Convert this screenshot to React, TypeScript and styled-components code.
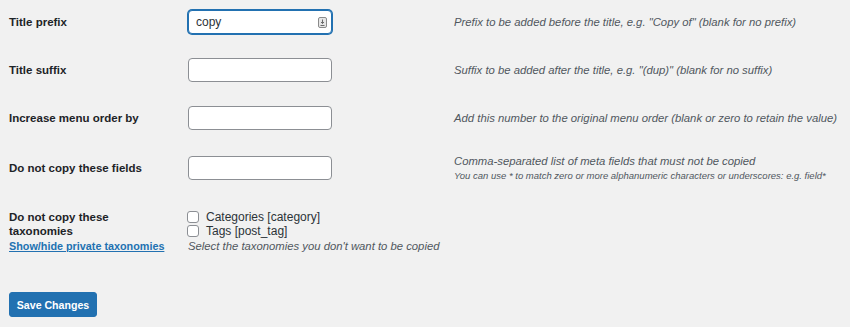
import React from 'react'
import styled, { createGlobalStyle } from 'styled-components'

const GlobalStyle = createGlobalStyle`
  html, body {
    margin: 0;
    padding: 0;
    background: #f1f1f1;
  }
  body {
    font-family: "Liberation Sans", Arial, sans-serif;
    font-size: 12px;
    color: #1d2327;
  }
`

const Page = styled('form')`
  padding: 0 9px;
  width: 850px;
  box-sizing: border-box;
`

const Row = styled('div')<{ top?: boolean }>`
  display: grid;
  grid-template-columns: 179px 266px 1fr;
  align-items: ${p => (p.top ? 'start' : 'center')};
  padding: ${p => (p.top ? '13px 0 0' : '10px 0 14px')};
`

const Label = styled('label')`
  font-weight: 700;
  font-size: 11.5px;
  line-height: 14.5px;
  width: 160px;
`

const Input = styled('input')<{ focused?: boolean }>`
  box-sizing: border-box;
  width: 144px;
  height: 24px;
  margin: 0;
  padding: 0 8px 0 7px;
  background: #fff;
  border: 1px solid ${p => (p.focused ? '#2271b1' : '#8c8f94')};
  box-shadow: ${p => (p.focused ? '0 0 0 1px #2271b1' : 'none')};
  border-radius: 4px;
  font-family: inherit;
  font-size: 12px;
  color: #2c3338;
  outline: none;
`

const InputWrap = styled('div')`
  position: relative;
  width: 144px;
`

const AutofillIcon = styled('svg')`
  position: absolute;
  right: 5px;
  top: 7px;
`

const Description = styled('div')`
  font-style: italic;
  font-size: 11.3px;
  line-height: 14.5px;
  color: #50575e;
  white-space: nowrap;
`

const SmallNote = styled('div')`
  font-size: 9.5px;
  line-height: 14px;
`

const Stack = styled('div')`
  display: flex;
  flex-direction: column;
`

const TaxCell = styled('div')`
  grid-column: 2 / 4;
  display: flex;
  flex-direction: column;
`

const CheckRow = styled('label')`
  display: flex;
  align-items: center;
  gap: 7px;
  height: 14.5px;
  font-size: 12px;
  color: #2c3338;
`

const Checkbox = styled('span')`
  box-sizing: border-box;
  width: 12px;
  height: 12px;
  margin-left: -1px;
  border: 1px solid #8c8f94;
  border-radius: 3px;
  background: #fff;
`

const ToggleLink = styled('a')`
  display: block;
  color: #2271b1;
  text-decoration: underline;
  font-weight: 700;
  font-size: 10.8px;
  line-height: 14.5px;
  white-space: nowrap;
`

const Submit = styled('div')`
  padding-top: 39px;
`

const Button = styled('button')`
  height: 25px;
  width: 88px;
  padding: 0;
  border: 1px solid #2271b1;
  border-radius: 3px;
  background: #2271b1;
  color: #fff;
  font-family: inherit;
  font-weight: 700;
  font-size: 10.6px;
  cursor: pointer;
`

const fields = [
  { label: 'Title prefix', value: 'copy', focused: true, desc: 'Prefix to be added before the title, e.g. "Copy of" (blank for no prefix)' },
  { label: 'Title suffix', value: '', desc: 'Suffix to be added after the title, e.g. "(dup)" (blank for no suffix)' },
  { label: 'Increase menu order by', value: '', desc: 'Add this number to the original menu order (blank or zero to retain the value)' },
]

const App = () => {
  return (
    <>
      <GlobalStyle />
      <Page onSubmit={e => e.preventDefault()}>
        {fields.map(f => (
          <Row key={f.label}>
            <Label>{f.label}</Label>
            <InputWrap>
              <Input focused={f.focused} defaultValue={f.value} />
              {f.focused && (
                <AutofillIcon width="9" height="11" viewBox="0 0 9 11">
                  <rect x="0.5" y="0.5" width="8" height="10" rx="1.5" fill="#e6e6e6" stroke="#8a8a8a" />
                  <path d="M4.5 2.5v4M3 5l1.5 1.5L6 5M2.5 8.5h4" stroke="#6b6b6b" strokeWidth="1" fill="none" />
                </AutofillIcon>
              )}
            </InputWrap>
            <Description>{f.desc}</Description>
          </Row>
        ))}
        <Row>
          <Label>Do not copy these fields</Label>
          <InputWrap>
            <Input />
          </InputWrap>
          <Description>
            <Stack>
              <span>Comma-separated list of meta fields that must not be copied</span>
              <SmallNote>You can use * to match zero or more alphanumeric characters or underscores: e.g. field*</SmallNote>
            </Stack>
          </Description>
        </Row>
        <Row top>
          <Stack>
            <Label>Do not copy these taxonomies</Label>
            <ToggleLink href="#">Show/hide private taxonomies</ToggleLink>
          </Stack>
          <TaxCell>
            <CheckRow>
              <Checkbox />
              Categories [category]
            </CheckRow>
            <CheckRow>
              <Checkbox />
              Tags [post_tag]
            </CheckRow>
            <Description>Select the taxonomies you don't want to be copied</Description>
          </TaxCell>
        </Row>
        <Submit>
          <Button type="submit">Save Changes</Button>
        </Submit>
      </Page>
    </>
  )
}

export default App
